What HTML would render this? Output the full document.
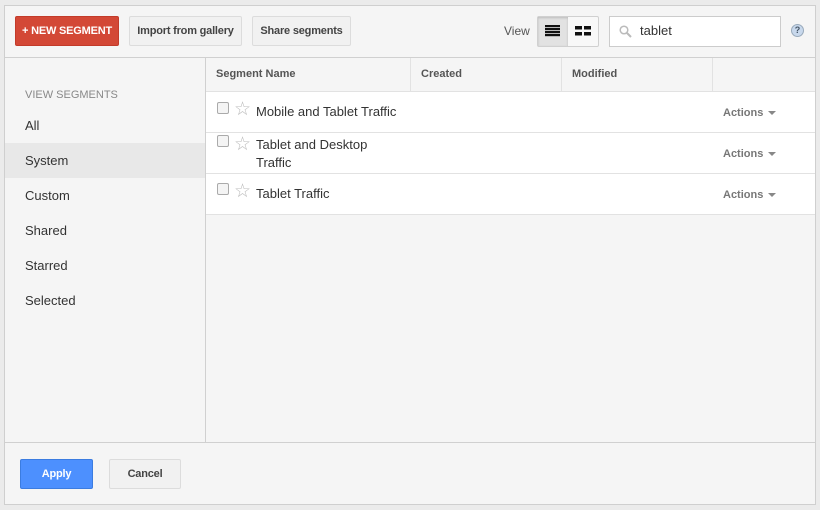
<!DOCTYPE html>
<html><head><style>
*{box-sizing:border-box;margin:0;padding:0}
body{width:820px;height:510px;background:#ebebeb;font-family:"Liberation Sans",Arial,sans-serif;position:relative;overflow:hidden}
.a{position:absolute}
.box{left:4px;top:5px;width:812px;height:500px;background:#f5f5f5;border:1px solid #cfcfcf}
.btn{position:absolute;height:30px;border:1px solid #dcdcdc;background:#f1f1f1;border-radius:2px;font-size:11px;font-weight:bold;color:#444;line-height:28px;text-align:center;letter-spacing:-0.2px}
.nav{position:absolute;left:5px;width:200px;height:35px;line-height:35px;padding-left:20px;font-size:13px;color:#333}
.row{position:absolute;left:206px;width:609px;height:41px;background:#fff;border-bottom:1px solid #e2e2e2}
.cb{position:absolute;left:11px;top:10px;width:12px;height:12px;border:1px solid #aaa;border-radius:2px;background:#f4f4f4}
.st{position:absolute;left:28px;top:8px;font-size:19px;line-height:20px;color:#bbb}
.nm{position:absolute;left:50px;font-size:13px;color:#333;line-height:18px}
.ac{position:absolute;left:517px;top:15px;font-size:11px;font-weight:bold;color:#777}
.ac:after{content:"";position:absolute;left:45px;top:4px;border:4px solid transparent;border-top:4px solid #888}
.hd{position:absolute;top:58px;height:34px;line-height:32px;font-size:11px;font-weight:bold;color:#555;border-right:1px solid #e2e2e2;padding-left:10px}
</style></head><body>
<div class="a box"></div>
<div class="btn" style="left:15px;top:16px;width:104px;background:#d34836;border-color:#c23b2a;color:#fff">+ NEW SEGMENT</div>
<div class="btn" style="left:129px;top:16px;width:113px">Import from gallery</div>
<div class="btn" style="left:252px;top:16px;width:99px">Share segments</div>
<div class="a" style="left:504px;top:24px;font-size:12px;color:#555">View</div>
<div class="a" style="left:537px;top:16px;width:62px;height:31px;border:1px solid #d0d0d0;border-radius:2px;background:#f8f8f8"></div>
<div class="a" style="left:538px;top:17px;width:30px;height:29px;background:#e2e2e2;box-shadow:inset 0 1px 2px #bbb"></div>
<svg class="a" style="left:545px;top:25px" width="16" height="12"><g fill="#111"><rect y="0" width="15" height="2.2"/><rect y="3" width="15" height="2.2"/><rect y="6" width="15" height="2.2"/><rect y="9" width="15" height="2.2"/></g></svg>
<svg class="a" style="left:575px;top:25px" width="16" height="12"><g fill="#111"><rect x="0" y="1" width="7" height="3.5"/><rect x="9" y="1" width="7" height="3.5"/><rect x="0" y="7" width="7" height="3.5"/><rect x="9" y="7" width="7" height="3.5"/></g></svg>
<div class="a" style="left:609px;top:16px;width:172px;height:31px;background:#fff;border:1px solid #ccc"></div>
<svg class="a" style="left:619px;top:25px" width="14" height="14"><circle cx="5" cy="5" r="3.8" stroke="#bbb" stroke-width="1.5" fill="none"/><path d="M8 8l4 4" stroke="#bbb" stroke-width="2"/></svg>
<div class="a" style="left:640px;top:23px;font-size:13px;color:#333">tablet</div>
<div class="a" style="left:791px;top:24px;width:13px;height:13px;border-radius:50%;background:#c8d8ec;border:1px solid #9ab;font-size:9px;font-weight:bold;color:#456;text-align:center;line-height:11px">?</div>
<div class="a" style="left:5px;top:57px;width:810px;height:1px;background:#d0d0d0"></div>
<div class="a" style="left:205px;top:58px;width:1px;height:384px;background:#d0d0d0"></div>
<div class="a" style="left:5px;top:442px;width:810px;height:1px;background:#d0d0d0"></div>
<div class="a" style="left:206px;top:91px;width:609px;height:1px;background:#e2e2e2"></div>
<div class="hd" style="left:206px;width:205px">Segment Name</div>
<div class="hd" style="left:411px;width:151px">Created</div>
<div class="hd" style="left:562px;width:151px">Modified</div>
<div class="a" style="left:25px;top:89px;font-size:11px;color:#888">VIEW SEGMENTS</div>
<div class="nav" style="top:108px">All</div>
<div class="nav" style="top:143px;background:#e8e8e8">System</div>
<div class="nav" style="top:178px">Custom</div>
<div class="nav" style="top:213px">Shared</div>
<div class="nav" style="top:248px">Starred</div>
<div class="nav" style="top:283px">Selected</div>
<div class="row" style="top:92px"><div class="cb"></div><div class="st">☆</div><div class="nm" style="top:11px">Mobile and Tablet Traffic</div><div class="ac">Actions</div></div>
<div class="row" style="top:133px"><div class="cb" style="top:2px"></div><div class="st" style="top:2px">☆</div><div class="nm" style="top:3px">Tablet and Desktop<br>Traffic</div><div class="ac">Actions</div></div>
<div class="row" style="top:174px"><div class="cb" style="top:9px"></div><div class="st">☆</div><div class="nm" style="top:11px">Tablet Traffic</div><div class="ac">Actions</div></div>
<div class="btn" style="left:20px;top:459px;width:73px;height:30px;background:#4d90fe;border-color:#3b7ce0;color:#fff">Apply</div>
<div class="btn" style="left:109px;top:459px;width:72px;height:30px">Cancel</div>
</body></html>
